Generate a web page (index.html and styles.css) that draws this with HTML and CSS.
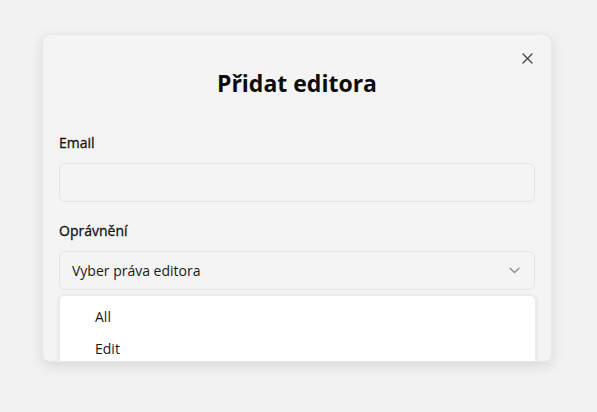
FILE: index.html
```html
<!DOCTYPE html>
<html lang="cs">
<head>
<meta charset="utf-8">
<title>Přidat editora</title>
<link rel="stylesheet" href="styles.css">
</head>
<body>
<div class="page">
  <div class="modal">
    <button class="close" aria-label="Zavřít">
      <svg width="11" height="11" viewBox="0 0 11 11"><path d="M1 1L10 10M10 1L1 10" stroke="#444" stroke-width="1.3" fill="none" stroke-linecap="round"/></svg>
    </button>
    <h1 class="title">Přidat editora</h1>
    <div class="field">
      <label class="label">Email</label>
      <div class="input"></div>
    </div>
    <div class="field">
      <label class="label">Oprávnění</label>
      <div class="input select">
        <span>Vyber práva editora</span>
        <svg width="11" height="7" viewBox="0 0 11 7"><path d="M1 1.2L5.5 5.5L10 1.2" stroke="#8a8a8a" stroke-width="1.2" fill="none" stroke-linecap="round" stroke-linejoin="round"/></svg>
      </div>
      <div class="menu">
        <div class="option">All</div>
        <div class="option">Edit</div>
      </div>
    </div>
  </div>
</div>
</body>
</html>
```
FILE: styles.css
```css
* { box-sizing: border-box; }
html, body { margin: 0; padding: 0; }
body {
  background: #f2f2f2;
  font-family: "Open Sans", "Noto Sans", sans-serif;
  color: #111;
  width: 597px;
  height: 412px;
  overflow: hidden;
}
.page {
  padding: 34px 45px 0 42px;
}
.modal {
  position: relative;
  width: 510px;
  height: 328px;
  overflow: hidden;
  background: #f4f4f4;
  border: 1px solid #e8e8e8;
  border-radius: 8px;
  box-shadow: 0 4px 14px rgba(0,0,0,0.10);
  padding: 0 16px;
}
.close {
  position: absolute;
  top: 18px;
  right: 18px;
  border: 0;
  background: transparent;
  padding: 0;
  width: 11px;
  height: 11px;
  display: flex;
}
.title {
  margin: 32px 0 0;
  text-align: center;
  font-size: 23px;
  font-weight: 700;
  line-height: 32px;
  color: #0b0b0b;
}
.field { margin-top: 34px; }
.field + .field { margin-top: 19px; }
.label {
  display: block;
  font-size: 14px;
  font-weight: 400;
  -webkit-text-stroke: 0.3px #111;
  line-height: 20px;
  color: #111;
}
.input {
  margin-top: 10px;
  height: 39px;
  border: 1px solid #e3e3e3;
  border-radius: 6px;
  background: #f4f4f4;
}
.select {
  display: flex;
  align-items: center;
  justify-content: space-between;
  padding: 0 14px 0 12px;
  font-size: 14px;
  color: #1a1a1a;
}
.menu {
  margin-top: 5px;
  margin-right: -1px;
  background: #fff;
  border-radius: 6px;
  box-shadow: 0 1px 4px rgba(0,0,0,0.12);
  border: 1px solid #ececec;
  padding-top: 5px;
}
.option {
  height: 32px;
  line-height: 32px;
  padding-left: 35px;
  font-size: 14px;
  color: #1a1a1a;
}
```
